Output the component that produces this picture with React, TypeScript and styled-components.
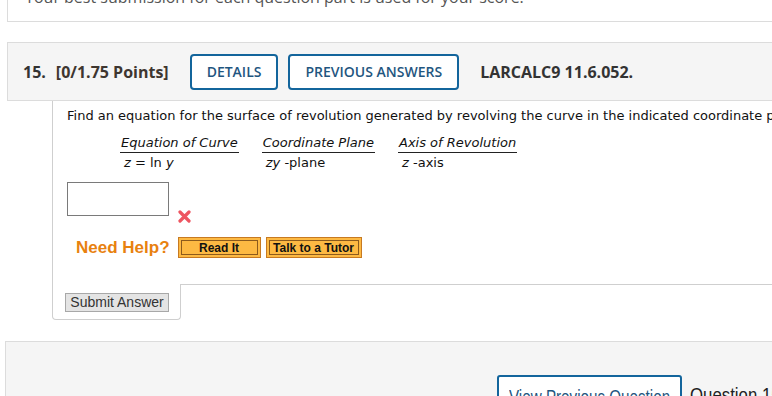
import styled, { createGlobalStyle } from "styled-components";

const GlobalStyle = createGlobalStyle`
  html, body {
    margin: 0;
    padding: 0;
    overflow: hidden;
    background: #fff;
  }
`;

const Page = styled.div`
  width: 900px;
  margin-top: -27px;
  padding-left: 7px;
  font-family: "Open Sans", "Liberation Sans", sans-serif;
`;

const Notice = styled.div`
  border: 1px solid #dcdcdc;
  border-top: none;
  padding: 12px 17px;
  font-size: 16px;
  line-height: 24px;
  color: #555;
`;

const QuestionHeader = styled.div`
  box-sizing: border-box;
  height: 59px;
  margin-top: 20px;
  display: flex;
  align-items: center;
  padding: 0 15px;
  background: #f5f5f5;
  border: 1px solid #dcdcdc;
`;

const QNumber = styled.span`
  font-size: 16px;
  font-weight: 700;
  color: #333;
  margin-right: 10px;
`;

const Points = styled.span`
  font-size: 16px;
  font-weight: 700;
  color: #3e3630;
  margin-right: 21px;
`;

const OutlineButton = styled.button`
  box-sizing: border-box;
  height: 36px;
  padding: 0 15px;
  margin-right: 10px;
  background: #fff;
  border: 2px solid #13659c;
  border-radius: 4px;
  font-family: "Open Sans", "Liberation Sans", sans-serif;
  font-size: 14px;
  font-weight: 600;
  color: #1f5680;
  text-transform: uppercase;
  cursor: pointer;
`;

const SourceRef = styled.span`
  margin-left: 11px;
  font-size: 16px;
  font-weight: 700;
  color: #333;
`;

const Body = styled.div`
  margin-left: 45px;
  padding: 7px 0 26px 14px;
  border-left: 1px solid #cfcfcf;
  border-bottom: 1px solid #cfcfcf;
  font-family: Verdana, "DejaVu Sans", sans-serif;
  font-size: 13px;
  line-height: 16px;
  color: #111;
`;

const Prompt = styled.p`
  margin: 0;
  white-space: nowrap;
`;

const CurveTable = styled.div`
  display: grid;
  grid-template-columns: repeat(3, max-content);
  column-gap: 23px;
  margin: 11px 0 0 53px;
`;

const HeadCell = styled.div`
  padding: 0 1px 1px;
  font-style: italic;
  border-bottom: 1px solid #222;
`;

const ValueCell = styled.div`
  padding: 2px 4px 0;
`;

const AnswerRow = styled.div`
  display: flex;
  align-items: flex-end;
  gap: 9px;
  margin-top: 11px;
`;

const AnswerInput = styled.input`
  box-sizing: border-box;
  width: 102px;
  height: 34px;
  border: 1px solid #7a7a7a;
  margin: 0;
`;

const WrongMark = styled.svg`
  width: 13px;
  height: 13px;
  margin-bottom: -7px;
`;

const HelpRow = styled.div`
  display: flex;
  align-items: center;
  margin-top: 21px;
  padding-left: 9px;
`;

const HelpLabel = styled.span`
  font-family: "Liberation Sans", Arial, sans-serif;
  font-size: 17px;
  font-weight: 700;
  color: #e8810f;
  margin-right: 8px;
`;

const HelpButton = styled.button<{ $wide?: boolean }>`
  box-sizing: border-box;
  height: 21px;
  width: ${(p) => (p.$wide ? "96px" : "83px")};
  margin-right: 5px;
  padding: 0;
  background: #fdb943;
  border: 1px solid #c77a22;
  box-shadow: inset 0 0 0 2px #fdb943, inset 0 0 0 3px #8c5a1c;
  font-family: "Liberation Sans", Arial, sans-serif;
  font-size: 12px;
  font-weight: 700;
  color: #111;
`;

const SubmitTab = styled.div`
  box-sizing: border-box;
  width: 129px;
  margin: -1px 0 0 45px;
  padding: 6px 0 7px 12px;
  background: #fff;
  border: 1px solid #cfcfcf;
  border-top: none;
  border-radius: 0 0 4px 4px;
`;

const SubmitButton = styled.button`
  box-sizing: border-box;
  height: 19px;
  width: 104px;
  padding: 0;
  background: #e4e4e4;
  border: 1px solid #a8a8a8;
  font-family: "Liberation Sans", Arial, sans-serif;
  font-size: 14px;
  color: #333;
`;

const NavBar = styled.div`
  margin: 21px 0 0 -2px;
  padding: 33px 0 0 491px;
  height: 80px;
  display: flex;
  align-items: flex-start;
  gap: 8px;
  background: #f5f5f5;
  border: 1px solid #dcdcdc;
`;

const NavButton = styled.button`
  box-sizing: border-box;
  height: 44px;
  width: 185px;
  padding: 0 0 0 10px;
  text-align: left;
  background: #fff;
  border: 2px solid #13659c;
  border-radius: 3px;
  overflow: hidden;
`;

const Condensed = styled.span<{ $color: string; $squeeze: number }>`
  display: inline-block;
  font-family: "Liberation Sans", Arial, sans-serif;
  font-size: 20px;
  line-height: 24px;
  color: ${(p) => p.$color};
  transform: scaleX(${(p) => p.$squeeze});
  transform-origin: left center;
  white-space: nowrap;
`;

const NavLabel = styled.div`
  padding-top: 8px;
`;

const App: React.FC = () => {
  return (
    <>
      <GlobalStyle />
      <Page>
        <Notice>Your best submission for each question part is used for your score.</Notice>
        <QuestionHeader>
          <QNumber>15.</QNumber>
          <Points>[0/1.75 Points]</Points>
          <OutlineButton>Details</OutlineButton>
          <OutlineButton>Previous Answers</OutlineButton>
          <SourceRef>LARCALC9 11.6.052.</SourceRef>
        </QuestionHeader>
        <Body>
          <Prompt>
            Find an equation for the surface of revolution generated by revolving the curve in the indicated coordinate plane about the given axis.
          </Prompt>
          <CurveTable>
            <HeadCell>Equation of Curve</HeadCell>
            <HeadCell>Coordinate Plane</HeadCell>
            <HeadCell>Axis of Revolution</HeadCell>
            <ValueCell>
              <i>z</i> = ln <i>y</i>
            </ValueCell>
            <ValueCell>
              <i>zy</i> -plane
            </ValueCell>
            <ValueCell>
              <i>z</i> -axis
            </ValueCell>
          </CurveTable>
          <AnswerRow>
            <AnswerInput type="text" />
            <WrongMark viewBox="0 0 13 13">
              <path d="M2 2 L11 11 M11 2 L2 11" stroke="#ee5560" strokeWidth="3.2" strokeLinecap="round" />
            </WrongMark>
          </AnswerRow>
          <HelpRow>
            <HelpLabel>Need Help?</HelpLabel>
            <HelpButton>Read It</HelpButton>
            <HelpButton $wide>Talk to a Tutor</HelpButton>
          </HelpRow>
        </Body>
        <SubmitTab>
          <SubmitButton>Submit Answer</SubmitButton>
        </SubmitTab>
        <NavBar>
          <NavButton>
            <Condensed $color="#1f5680" $squeeze={0.76}>View Previous Question</Condensed>
          </NavButton>
          <NavLabel>
            <Condensed $color="#222" $squeeze={0.84}>Question 15</Condensed>
          </NavLabel>
        </NavBar>
      </Page>
    </>
  );
};

export default App;
